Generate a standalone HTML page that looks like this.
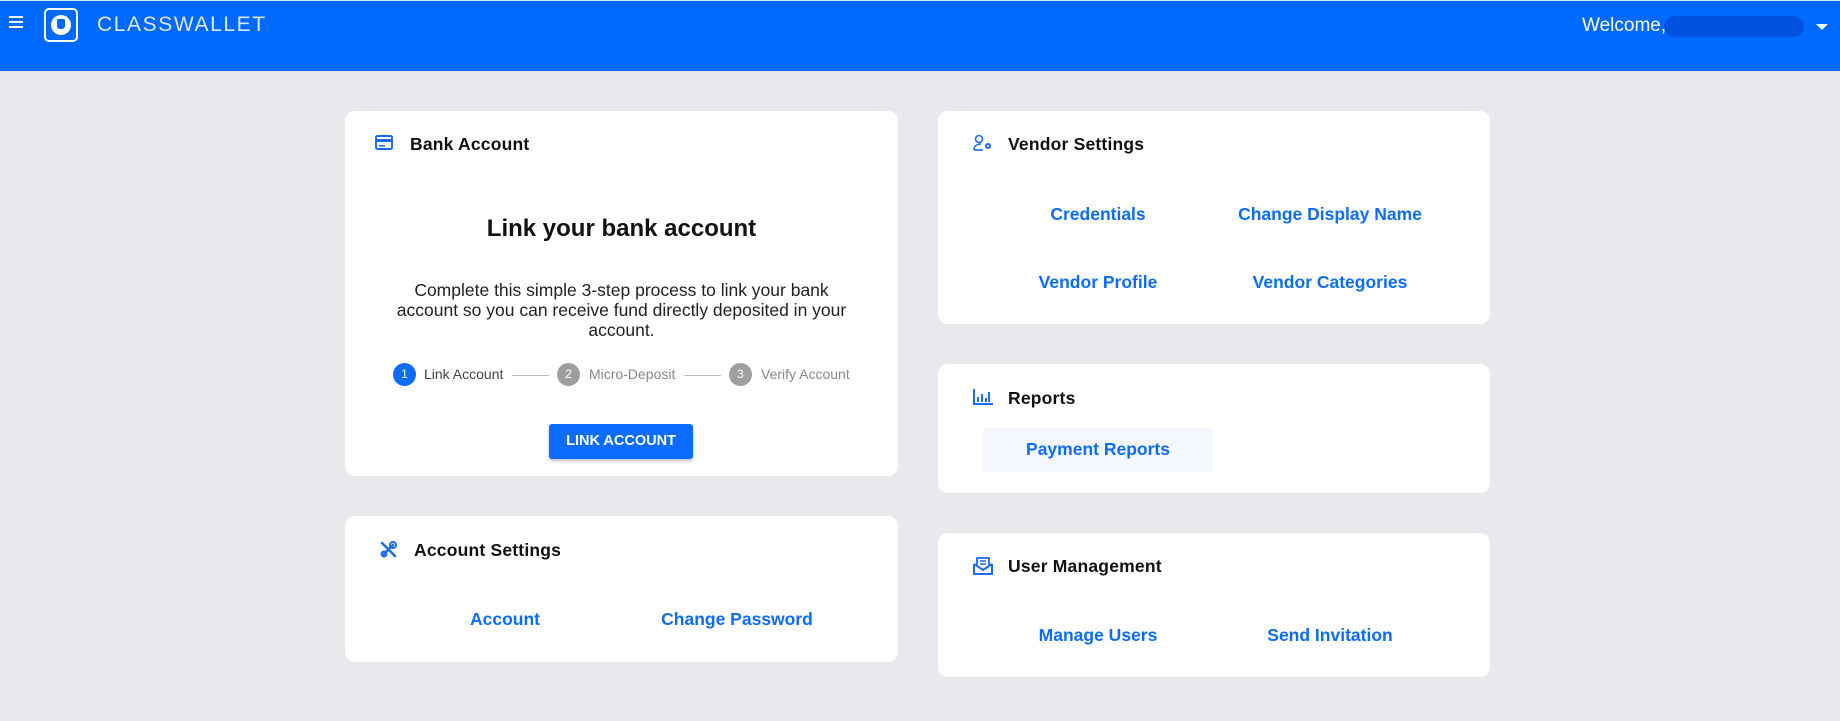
<!DOCTYPE html>
<html><head><meta charset="utf-8"><style>
*{margin:0;padding:0;box-sizing:border-box}
body{width:1840px;height:721px;background:#eae8ed;font-family:"Liberation Sans",Arial,sans-serif;position:relative;overflow:hidden}
.hdr{position:absolute;left:0;top:1px;width:1840px;height:70px;background:#0069ff}
.topline{position:absolute;left:0;top:0;width:1840px;height:1px;background:#dfe8ff}
.card{position:absolute;background:#fff;border-radius:10px}
.t{position:absolute;font-size:17.5px;font-weight:bold;color:#111;letter-spacing:.2px}
.ic{position:absolute}
.lk{position:absolute;font-size:17.5px;font-weight:bold;color:#0b6cff;transform:translateX(-50%);white-space:nowrap}
.ab{position:absolute;white-space:nowrap}
</style></head><body>
<div class="topline"></div>
<div class="hdr">
 <div class="ab" style="left:9px;top:15px;width:14px;height:2px;background:#fff;box-shadow:0 5px 0 #fff,0 10px 0 #fff"></div>
 <div class="ab" style="left:44px;top:7px;width:34px;height:34px;border:2px solid #fff;border-radius:5px"></div>
 <div class="ab" style="left:51px;top:14px;width:20px;height:20px;border-radius:50%;background:#fff"></div>
 <div class="ab" style="left:57px;top:18px;width:8px;height:10px;background:#0069ff;border-radius:1px 1px 3px 3px"></div>
 <div class="ab" style="left:97px;top:12px;color:#dce8ff;font-size:21px;letter-spacing:1.6px">CLASSWALLET</div>
 <div class="ab" style="left:1582px;top:14px;color:#fff;font-size:19px">Welcome,</div>
 <div class="ab" style="left:1664px;top:15px;width:140px;height:21px;border-radius:11px;background:#0052e0"></div>
 <div class="ab" style="left:1816px;top:23px;width:0;height:0;border-left:6px solid transparent;border-right:6px solid transparent;border-top:6px solid #fff"></div>
</div>

<!-- Bank Account -->
<div class="card" style="left:345px;top:111px;width:553px;height:365px">
 <svg class="ic" style="left:30px;top:24px" width="18" height="15" viewBox="0 0 18 15"><rect x="1" y="1" width="16" height="13" rx="1.5" fill="none" stroke="#1a6cf0" stroke-width="2"/><rect x="1" y="4" width="16" height="3" fill="#1a6cf0"/><rect x="4" y="10" width="6" height="1.5" fill="#1a6cf0"/></svg>
 <div class="t" style="left:65px;top:23px">Bank Account</div>
 <div class="ab" style="left:0;width:553px;text-align:center;top:104px;font-size:24px;font-weight:bold;color:#111">Link your bank account</div>
 <div class="ab" style="left:0;width:553px;text-align:center;top:169px;font-size:17.5px;line-height:20px;color:#222;white-space:normal;padding:0 42px">Complete this simple 3-step process to link your bank account so you can receive fund directly deposited in your account.</div>
 <div class="ab" style="left:48px;top:252px;width:23px;height:23px;border-radius:50%;background:#0b6cff;color:#fff;font-size:12px;text-align:center;line-height:23px">1</div>
 <div class="ab" style="left:79px;top:255px;font-size:14px;color:#444">Link Account</div>
 <div class="ab" style="left:167px;top:264px;width:37px;height:1px;background:#bbb"></div>
 <div class="ab" style="left:212px;top:252px;width:23px;height:23px;border-radius:50%;background:#9e9e9e;color:#fff;font-size:12px;text-align:center;line-height:23px">2</div>
 <div class="ab" style="left:244px;top:255px;font-size:14px;color:#888">Micro-Deposit</div>
 <div class="ab" style="left:339px;top:264px;width:37px;height:1px;background:#bbb"></div>
 <div class="ab" style="left:384px;top:252px;width:23px;height:23px;border-radius:50%;background:#9e9e9e;color:#fff;font-size:12px;text-align:center;line-height:23px">3</div>
 <div class="ab" style="left:416px;top:255px;font-size:14px;color:#888">Verify Account</div>
 <div class="ab" style="left:204px;top:313px;width:144px;height:35px;background:#0b6cff;border-radius:3px;box-shadow:0 2px 3px rgba(0,0,0,.25);color:#fff;font-size:14.5px;font-weight:bold;text-align:center;line-height:35px">LINK ACCOUNT</div>
</div>

<!-- Account Settings -->
<div class="card" style="left:345px;top:516px;width:553px;height:146px">
 <svg class="ic" style="left:34px;top:24px" width="19" height="19" viewBox="0 0 19 19"><path d="M3 3l13 13M4 15l4-4M11 8l3-3" stroke="#1a6cf0" stroke-width="2.5" stroke-linecap="round" fill="none"/><circle cx="14" cy="5" r="3" fill="none" stroke="#1a6cf0" stroke-width="2"/><circle cx="5" cy="14" r="2.5" fill="none" stroke="#1a6cf0" stroke-width="2"/></svg>
 <div class="t" style="left:69px;top:24px">Account Settings</div>
 <div class="lk" style="left:160px;top:93px">Account</div>
 <div class="lk" style="left:392px;top:93px">Change Password</div>
</div>

<!-- Vendor Settings -->
<div class="card" style="left:938px;top:111px;width:552px;height:213px">
 <svg class="ic" style="left:35px;top:23px" width="20" height="18" viewBox="0 0 20 18"><circle cx="6" cy="5" r="3.5" fill="none" stroke="#1a6cf0" stroke-width="1.6"/><path d="M1 16c0-4 3-6 7-6" fill="none" stroke="#1a6cf0" stroke-width="1.6"/><path d="M1 16h9" stroke="#1a6cf0" stroke-width="1.6"/><circle cx="15" cy="12" r="3" fill="#1a6cf0"/><circle cx="15" cy="12" r="1" fill="#fff"/></svg>
 <div class="t" style="left:70px;top:23px">Vendor Settings</div>
 <div class="lk" style="left:160px;top:93px">Credentials</div>
 <div class="lk" style="left:392px;top:93px">Change Display Name</div>
 <div class="lk" style="left:160px;top:161px">Vendor Profile</div>
 <div class="lk" style="left:392px;top:161px">Vendor Categories</div>
</div>

<!-- Reports -->
<div class="card" style="left:938px;top:364px;width:552px;height:129px">
 <svg class="ic" style="left:35px;top:25px" width="20" height="16" viewBox="0 0 20 16"><path d="M1 0v15h19" fill="none" stroke="#1a6cf0" stroke-width="2"/><path d="M5 8v5M9 5v8M13 9v4M16 3v10" stroke="#1a6cf0" stroke-width="2"/></svg>
 <div class="t" style="left:70px;top:24px">Reports</div>
 <div class="ab" style="left:45px;top:64px;width:230px;height:44px;background:#f4f7fd;border-radius:3px"></div>
 <div class="lk" style="left:160px;top:75px">Payment Reports</div>
</div>

<!-- User Management -->
<div class="card" style="left:938px;top:533px;width:552px;height:144px">
 <svg class="ic" style="left:35px;top:22px" width="20" height="20" viewBox="0 0 20 20"><path d="M1 9v10h18V9" fill="none" stroke="#1a6cf0" stroke-width="2"/><path d="M1 9l9 6 9-6" fill="none" stroke="#1a6cf0" stroke-width="2"/><path d="M4 11V3h12v8" fill="none" stroke="#1a6cf0" stroke-width="1.8"/><path d="M7 6h6M7 9h6" stroke="#1a6cf0" stroke-width="1.6"/></svg>
 <div class="t" style="left:70px;top:23px">User Management</div>
 <div class="lk" style="left:160px;top:92px">Manage Users</div>
 <div class="lk" style="left:392px;top:92px">Send Invitation</div>
</div>
</body></html>
